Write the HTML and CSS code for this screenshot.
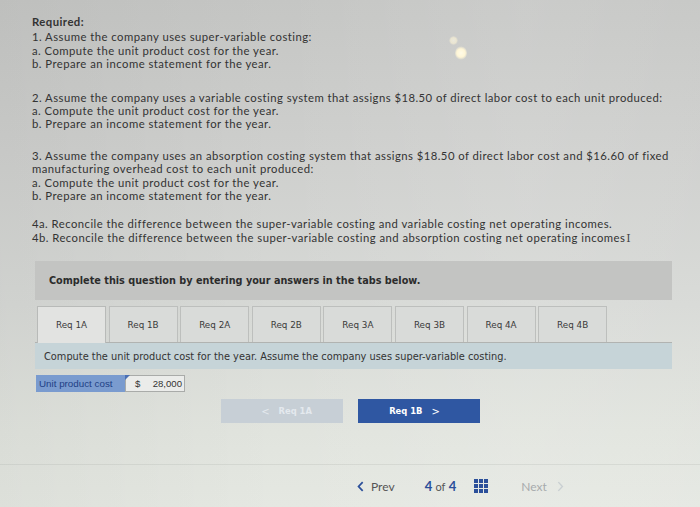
FILE: index.html
```html
<!DOCTYPE html>
<html>
<head>
<meta charset="utf-8">
<link rel="stylesheet" href="styles.css">
</head>
<body>
<div class="page">
  <div class="glare"></div>
  <div class="glare small"></div>
  <div class="req">
    <p class="title">Required:</p>
    <p class="group g1">1. Assume the company uses super-variable costing:<br>a. Compute the unit product cost for the year.<br>b. Prepare an income statement for the year.</p>
    <p class="group g2">2. Assume the company uses a variable costing system that assigns $18.50 of direct labor cost to each unit produced:<br>a. Compute the unit product cost for the year.<br>b. Prepare an income statement for the year.</p>
    <p class="group g3">3. Assume the company uses an absorption costing system that assigns $18.50 of direct labor cost and $16.60 of fixed<br>manufacturing overhead cost to each unit produced:<br>a. Compute the unit product cost for the year.<br>b. Prepare an income statement for the year.</p>
    <p class="group g4">4a. Reconcile the difference between the super-variable costing and variable costing net operating incomes.<br>4b. Reconcile the difference between the super-variable costing and absorption costing net operating incomes<span class="cursor">I</span></p>
  </div>

  <div class="panel">
    <div class="banner">Complete this question by entering your answers in the tabs below.</div>
    <div class="tabs">
      <div class="tab active">Req 1A</div>
      <div class="tab">Req 1B</div>
      <div class="tab">Req 2A</div>
      <div class="tab">Req 2B</div>
      <div class="tab">Req 3A</div>
      <div class="tab">Req 3B</div>
      <div class="tab">Req 4A</div>
      <div class="tab">Req 4B</div>
    </div>
    <div class="instr">Compute the unit product cost for the year. Assume the company uses super-variable costing.</div>
    <div class="answer">
      <div class="label">Unit product cost</div>
      <div class="input"><span class="flag"></span><span>$</span><span>28,000</span></div>
    </div>
    <div class="btns">
      <div class="btn disabled"><span class="chev">&lt;</span> Req 1A</div>
      <div class="btn primary">Req 1B <span class="chev">&gt;</span></div>
    </div>
  </div>

  <div class="rule"></div>

  <div class="nav">
    <div class="prev"><svg class="ic" viewBox="0 0 8 12" width="7" height="11"><path d="M6.5 1 L1.8 6 L6.5 11" fill="none" stroke="#2b4f9a" stroke-width="2"/></svg><span>Prev</span></div>
    <div class="count"><b>4</b> <span class="of">of</span> <b>4</b></div>
    <svg class="grid" viewBox="0 0 14 14" width="14" height="14">
      <rect x="0" y="0" width="4" height="4"/><rect x="5" y="0" width="4" height="4"/><rect x="10" y="0" width="4" height="4"/>
      <rect x="0" y="5" width="4" height="4"/><rect x="5" y="5" width="4" height="4"/><rect x="10" y="5" width="4" height="4"/>
      <rect x="0" y="10" width="4" height="4"/><rect x="5" y="10" width="4" height="4"/><rect x="10" y="10" width="4" height="4"/>
    </svg>
    <div class="next"><span>Next</span><svg class="ic" viewBox="0 0 8 12" width="7" height="11"><path d="M1.5 1 L6.2 6 L1.5 11" fill="none" stroke="#c9cfd2" stroke-width="1.6"/></svg></div>
  </div>
</div>
</body>
</html>
```

FILE: styles.css
```css
html, body {
  margin: 0;
  padding: 0;
}
body {
  width: 700px;
  height: 507px;
  overflow: hidden;
  background: linear-gradient(180deg, #c5c6c4 0%, #cecfcd 30%, #d7d9d6 60%, #e1e4de 85%, #e5e8e2 100%);
}
.page {
  position: relative;
  width: 700px;
  height: 507px;
  background: linear-gradient(90deg, rgba(0,0,0,0.035) 0%, rgba(255,255,255,0) 40%, rgba(255,255,255,0.10) 75%, rgba(255,255,255,0.05) 100%);
  font-family: Lato, "Liberation Sans", sans-serif;
  color: #333;
}
.glare {
  position: absolute;
  left: 455px;
  top: 46px;
  width: 12px;
  height: 14px;
  border-radius: 50%;
  background: radial-gradient(circle, #fffbe8 0%, #fff6d6 45%, rgba(255,250,230,0) 75%);
}
.glare.small {
  left: 449px;
  top: 36px;
  width: 9px;
  height: 9px;
  opacity: 0.6;
}
.req {
  padding: 15px 0 0 32px;
  font-size: 11.3px;
  letter-spacing: 0.46px;
  line-height: 13.4px;
}
.req p {
  margin: 0;
}
.title {
  font-weight: 700;
  margin-bottom: 2px !important;
}
.g2 {
  margin-top: 20px !important;
}
.g3 {
  margin-top: 18px !important;
}
.g4 {
  margin-top: 15px !important;
}
.cursor {
  font-family: "DejaVu Serif", serif;
  font-size: 11px;
  color: #444;
  margin-left: 1px;
}
.panel {
  margin: 16px 28px 0 35px;
  font-family: "DejaVu Sans", Verdana, sans-serif;
}
.banner {
  height: 39px;
  background: #c3c4c2;
  display: flex;
  align-items: center;
  padding-left: 14px;
  font-weight: 700;
  font-size: 9.7px;
  color: #2c2c2c;
  margin-bottom: 6px;
}
.tabs {
  display: flex;
  gap: 2.6px;
  padding-left: 2px;
  border-bottom: 1px solid #b1b3b1;
  height: 36px;
}
.tab {
  width: 67px;
  height: 35px;
  border: 1px solid #bdbfbd;
  border-bottom: none;
  background: #d9dbd9;
  display: flex;
  align-items: center;
  justify-content: center;
  font-size: 8.8px;
  color: #3a3a3a;
}
.tab.active {
  background: #e2e3e1;
  height: 36px;
  margin-bottom: -1px;
  border-color: #b8bab8;
}
.instr {
  height: 26px;
  background: #c6d4d8;
  display: flex;
  align-items: center;
  padding-left: 9px;
  font-size: 9.8px;
  color: #333;
}
.answer {
  display: flex;
  margin-top: 6px;
  margin-left: 1px;
  height: 17px;
}
.label {
  width: 89px;
  background: #7a9bcf;
  color: #1f3f85;
  font-family: "Liberation Sans", Arial, sans-serif;
  font-size: 9.8px;
  display: flex;
  align-items: center;
  padding-left: 3px;
  box-sizing: border-box;
}
.input {
  position: relative;
  width: 60px;
  box-sizing: border-box;
  border: 1px solid #a9aba9;
  background: #ebecea;
  display: flex;
  align-items: center;
  justify-content: space-between;
  padding: 0 2px 0 9px;
  font-family: "Liberation Sans", Arial, sans-serif;
  font-size: 9.6px;
  color: #333;
}
.flag {
  position: absolute;
  left: -1px;
  top: -1px;
  width: 0;
  height: 0;
  border-top: 5px solid #4a6fb4;
  border-right: 5px solid transparent;
}
.btns {
  display: flex;
  gap: 15px;
  margin-top: 7px;
  margin-left: 186px;
}
.btn {
  width: 122px;
  height: 24px;
  display: flex;
  align-items: center;
  justify-content: center;
  font-size: 8.4px;
  font-weight: 700;
  color: #fff;
}
.btn.disabled {
  background: #c7cfd6;
  color: #e4e9ee;
}
.btn.primary {
  background: #2f57a2;
}
.chev {
  font-weight: 400;
  margin: 0 9px;
  font-size: 10px;
}
.rule {
  height: 1px;
  margin-top: 41px;
  background: rgba(150,155,150,0.18);
}
.nav {
  display: flex;
  align-items: center;
  margin-top: 13px;
  margin-left: 357px;
  height: 16px;
  font-family: Lato, "Liberation Sans", sans-serif;
  font-size: 12px;
}
.prev {
  display: flex;
  align-items: center;
  gap: 7px;
  color: #555;
}
.count {
  margin-left: 30px;
  color: #2b4f9a;
  font-size: 13px;
}
.count b {
  font-weight: 700;
}
.of {
  font-size: 11px;
  color: #555;
}
.grid {
  margin-left: 18px;
  fill: #2b4f9a;
}
.next {
  display: flex;
  align-items: center;
  gap: 10px;
  margin-left: 33px;
  color: #a7abad;
}
```
